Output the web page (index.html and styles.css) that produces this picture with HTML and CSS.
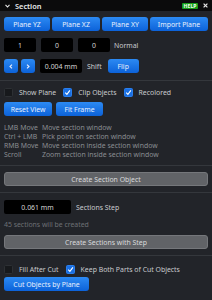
FILE: index.html
```html
<!DOCTYPE html>
<html>
<head>
<meta charset="utf-8">
<link rel="stylesheet" href="styles.css">
</head>
<body>
<div class="panel">
  <div class="header">
    <svg class="chev" width="5" height="4" viewBox="0 0 5 4"><path d="M0.5 0.8 L2.5 3 L4.5 0.8" fill="none" stroke="#e8e8e8" stroke-width="1.1"/></svg>
    <span class="title">Section</span>
    <span class="help">HELP</span>
    <svg class="close" width="5" height="5" viewBox="0 0 5 5"><path d="M0.6 0.6 L4.4 4.4 M4.4 0.6 L0.6 4.4" stroke="#e8e8e8" stroke-width="1.2"/></svg>
  </div>
  <div class="content">
    <div class="row r1">
      <button class="btn w46">Plane YZ</button>
      <button class="btn w48">Plane XZ</button>
      <button class="btn w46">Plane XY</button>
      <button class="btn w58">Import Plane</button>
    </div>
    <div class="row r2">
      <div class="inp w32">1</div>
      <div class="inp w32">0</div>
      <div class="inp w32">0</div>
      <span class="lbl">Normal</span>
    </div>
    <div class="row r3">
      <div class="arrows">
        <button class="btn sq"><svg width="4" height="5" viewBox="0 0 4 5"><path d="M3 0.6 L1 2.5 L3 4.4" fill="none" stroke="#e8eefc" stroke-width="1.1"/></svg></button>
        <button class="btn sq"><svg width="4" height="5" viewBox="0 0 4 5"><path d="M1 0.6 L3 2.5 L1 4.4" fill="none" stroke="#e8eefc" stroke-width="1.1"/></svg></button>
      </div>
      <div class="inp w42">0.004 mm</div>
      <span class="lbl">Shift</span>
      <button class="btn w31 flip">Flip</button>
    </div>
    <div class="sep s1"></div>
    <div class="row cbrow c1">
      <span class="cb"></span><span class="lbl cbl">Show Plane</span>
      <span class="cb on"><svg width="7" height="7" viewBox="0 0 7 7"><path d="M1.2 3.6 L2.9 5.3 L5.9 1.4" fill="none" stroke="#fff" stroke-width="1.1"/></svg></span><span class="lbl cbl">Clip Objects</span>
      <span class="cb on"><svg width="7" height="7" viewBox="0 0 7 7"><path d="M1.2 3.6 L2.9 5.3 L5.9 1.4" fill="none" stroke="#fff" stroke-width="1.1"/></svg></span><span class="lbl cbl">Recolored</span>
    </div>
    <div class="row r4">
      <button class="btn w48">Reset View</button>
      <button class="btn w47">Fit Frame</button>
    </div>
    <div class="hints">
      <span>LMB Move</span><span>Move section window</span>
      <span>Ctrl + LMB</span><span>Pick point on section window</span>
      <span>RMB Move</span><span>Move section inside section window</span>
      <span>Scroll</span><span>Zoom section inside section window</span>
    </div>
    <div class="sep s2"></div>
    <button class="gbtn g1">Create Section Object</button>
    <div class="sep s3"></div>
    <div class="row r5">
      <div class="inp w67">0.061 mm</div>
      <span class="lbl">Sections Step</span>
    </div>
    <div class="note">45 sections will be created</div>
    <button class="gbtn g2">Create Sections with Step</button>
    <div class="sep s4"></div>
    <div class="row cbrow c2">
      <span class="cb"></span><span class="lbl cbl">Fill After Cut</span>
      <span class="cb on"><svg width="7" height="7" viewBox="0 0 7 7"><path d="M1.2 3.6 L2.9 5.3 L5.9 1.4" fill="none" stroke="#fff" stroke-width="1.1"/></svg></span><span class="lbl cbl">Keep Both Parts of Cut Objects</span>
    </div>
    <div class="row r6">
      <button class="btn w85">Cut Objects by Plane</button>
    </div>
  </div>
</div>
</body>
</html>
```
FILE: styles.css
```css
* { box-sizing: border-box; }
html, body { margin: 0; padding: 0; }
body {
  width: 212px;
  height: 300px;
  overflow: hidden;
  background: #222429;
  font-family: "Noto Sans", "Open Sans", sans-serif;
  font-size: 6.9px;
}
.panel {
  width: 212px;
  height: 300px;
  background: #222429;
  display: flex;
  flex-direction: column;
}
.header {
  height: 11px;
  background: #0b0b0c;
  display: flex;
  align-items: center;
  padding: 0 4px 0 5px;
}
.chev { margin-right: 5px; }
.title {
  color: #ececec;
  font-weight: 600;
  font-size: 7.4px;
  flex: 1;
}
.help {
  background: #17a019;
  color: #f4fff4;
  font-size: 5px;
  font-weight: 700;
  line-height: 6px;
  height: 6px;
  padding: 0 1.5px;
  border-radius: 1px;
  margin-right: 5px;
  letter-spacing: 0.1px;
}
.content {
  padding: 0 4px;
  display: flex;
  flex-direction: column;
}
.row {
  display: flex;
  align-items: center;
  height: 14px;
}
.btn {
  height: 14px;
  border: none;
  border-radius: 3px;
  background: linear-gradient(to bottom, #2c8af3, #0c62d9);
  color: #e8f0fd;
  font-family: inherit;
  font-size: 6.9px;
  padding: 0;
  display: flex;
  align-items: center;
  justify-content: center;
  flex: 0 0 auto;
}
.r1 { margin-top: 6px; gap: 2px; }
.w46 { width: 46px; }
.w48 { width: 48px; }
.w58 { width: 58px; }
.w47 { width: 47px; }
.w31 { width: 31px; }
.w85 { width: 85px; }
.w32 { width: 32px; }
.w42 { width: 42px; }
.w67 { width: 67px; }
.inp {
  height: 14px;
  background: #000;
  border-radius: 2px;
  color: #d4d4d4;
  display: flex;
  align-items: center;
  justify-content: center;
  flex: 0 0 auto;
}
.lbl { color: #c9cbce; white-space: nowrap; }
.r2 { margin-top: 7px; gap: 5px; }
.r2 .lbl { margin-left: -1px; }
.r3 { margin-top: 7px; gap: 5px; }
.arrows { display: flex; gap: 3px; }
.sq { width: 14px; }
.flip { margin-left: 1px; }
.sep { height: 1px; background: #34373c; margin-left: -4px; margin-right: -4px; }
.s1 { margin-top: 7px; }
.cbrow { gap: 0; }
.c1 { margin-top: 4px; }
.cb {
  width: 9px;
  height: 9px;
  border-radius: 1.5px;
  background: #17191c;
  border: 1px solid #2d3034;
  display: flex;
  align-items: center;
  justify-content: center;
  flex: 0 0 auto;
}
.cb.on { background: #1a6fe2; border-color: #2a7fee; }
.cbl { margin-left: 6px; margin-right: 7px; }
.r4 { margin-top: 3px; gap: 4px; }
.hints {
  margin-top: 7px;
  display: grid;
  grid-template-columns: 38px auto;
  line-height: 9px;
  color: #8a8d92;
}
.s2 { margin-top: 6px; }
.gbtn {
  height: 14px;
  margin-top: 6px;
  width: 204px;
  border: 1px solid #75777b;
  border-radius: 3px;
  background: #616367;
  color: #d9dadc;
  font-family: inherit;
  font-size: 6.9px;
  padding: 0;
}
.s3 { margin-top: 6px; }
.r5 { margin-top: 7px; gap: 5px; }
.note { margin-top: 6px; line-height: 9px; color: #6d7075; }
.g2 { margin-top: 6px; }
.s4 { margin-top: 6px; }
.c2 { margin-top: 6px; }
.r6 { margin-top: 1px; }
```
